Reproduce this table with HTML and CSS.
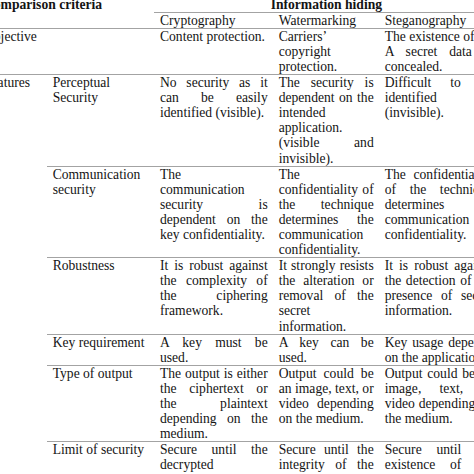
FILE: index.html
```html
<!DOCTYPE html>
<html lang="en">
<head>
<meta charset="utf-8">
<title>Comparison criteria</title>
<link rel="stylesheet" href="styles.css">
</head>
<body>
<div class="viewport">
<table class="cmp">
  <colgroup>
    <col class="c0"><col class="c1"><col class="c2"><col class="c3"><col class="c4">
  </colgroup>
  <thead>
    <tr>
      <th class="crit" colspan="2" rowspan="2">Comparison criteria</th>
      <th class="hiding" colspan="3">Information hiding</th>
    </tr>
    <tr class="sub">
      <th>Cryptography</th>
      <th>Watermarking</th>
      <th>Steganography</th>
    </tr>
  </thead>
  <tbody>
    <tr>
      <td colspan="2">Objective</td>
      <td>Content protection.</td>
      <td>Carriers’ copyright protection.</td>
      <td>The existence of<br>A secret data is concealed.</td>
    </tr>
    <tr>
      <td class="group" rowspan="6">Features</td>
      <td>Perceptual Security</td>
      <td>No security as it can be easily identified (visible).</td>
      <td>The security is dependent on the intended application. (visible and invisible).</td>
      <td>Difficult to be identified (invisible).</td>
    </tr>
    <tr>
      <td>Communication security</td>
      <td>The communication security is dependent on the key confidentiality.</td>
      <td>The confidentiality of the technique determines the communication confidentiality.</td>
      <td>The confidentiality of the technique determines the communication confidentiality.</td>
    </tr>
    <tr>
      <td>Robustness</td>
      <td>It is robust against the complexity of the ciphering framework.</td>
      <td>It strongly resists the alteration or removal of the secret information.</td>
      <td>It is robust against the detection of the presence of secret information.</td>
    </tr>
    <tr>
      <td>Key requirement</td>
      <td>A key must be used.</td>
      <td>A key can be used.</td>
      <td>Key usage depends on the application.</td>
    </tr>
    <tr>
      <td>Type of output</td>
      <td>The output is either the ciphertext or the plaintext depending on the medium.</td>
      <td>Output could be an image, text, or video depending on the medium.</td>
      <td>Output could be an image, text, or video depending on the medium.</td>
    </tr>
    <tr>
      <td>Limit of security</td>
      <td>Secure until the decrypted ciphertext is revealed.</td>
      <td>Secure until the integrity of the watermark is lost.</td>
      <td>Secure until the existence of the secret is detected.</td>
    </tr>
  </tbody>
</table>
</div>
</body>
</html>
```
FILE: styles.css
```css
html, body {
  margin: 0;
  padding: 0;
  background: #ffffff;
  overflow: hidden;
}

.viewport {
  width: 474px;
  height: 474px;
  overflow: hidden;
}

.cmp {
  border-collapse: collapse;
  table-layout: fixed;
  width: 519.7px;
  margin: -3.4px 0 0 -22px;
  font-family: "Liberation Serif", "Times New Roman", serif;
  font-size: 13.6px;
  line-height: 15.1px;
  color: #141414;
}

.c0 { width: 68.7px; }
.c1 { width: 107.3px; }
.c2 { width: 118.7px; }
.c3 { width: 106px; }
.c4 { width: 119px; }

.cmp th,
.cmp td {
  padding: 0 5px 0 6px;
  vertical-align: top;
  text-align: justify;
  font-weight: normal;
  border-bottom: 1px solid #a3a3a3;
}

.cmp th {
  text-align: left;
}

.cmp .crit {
  font-weight: bold;
}

.cmp .hiding {
  font-weight: bold;
  text-align: center;
}

.cmp td.group {
  border-bottom: none;
}
```
